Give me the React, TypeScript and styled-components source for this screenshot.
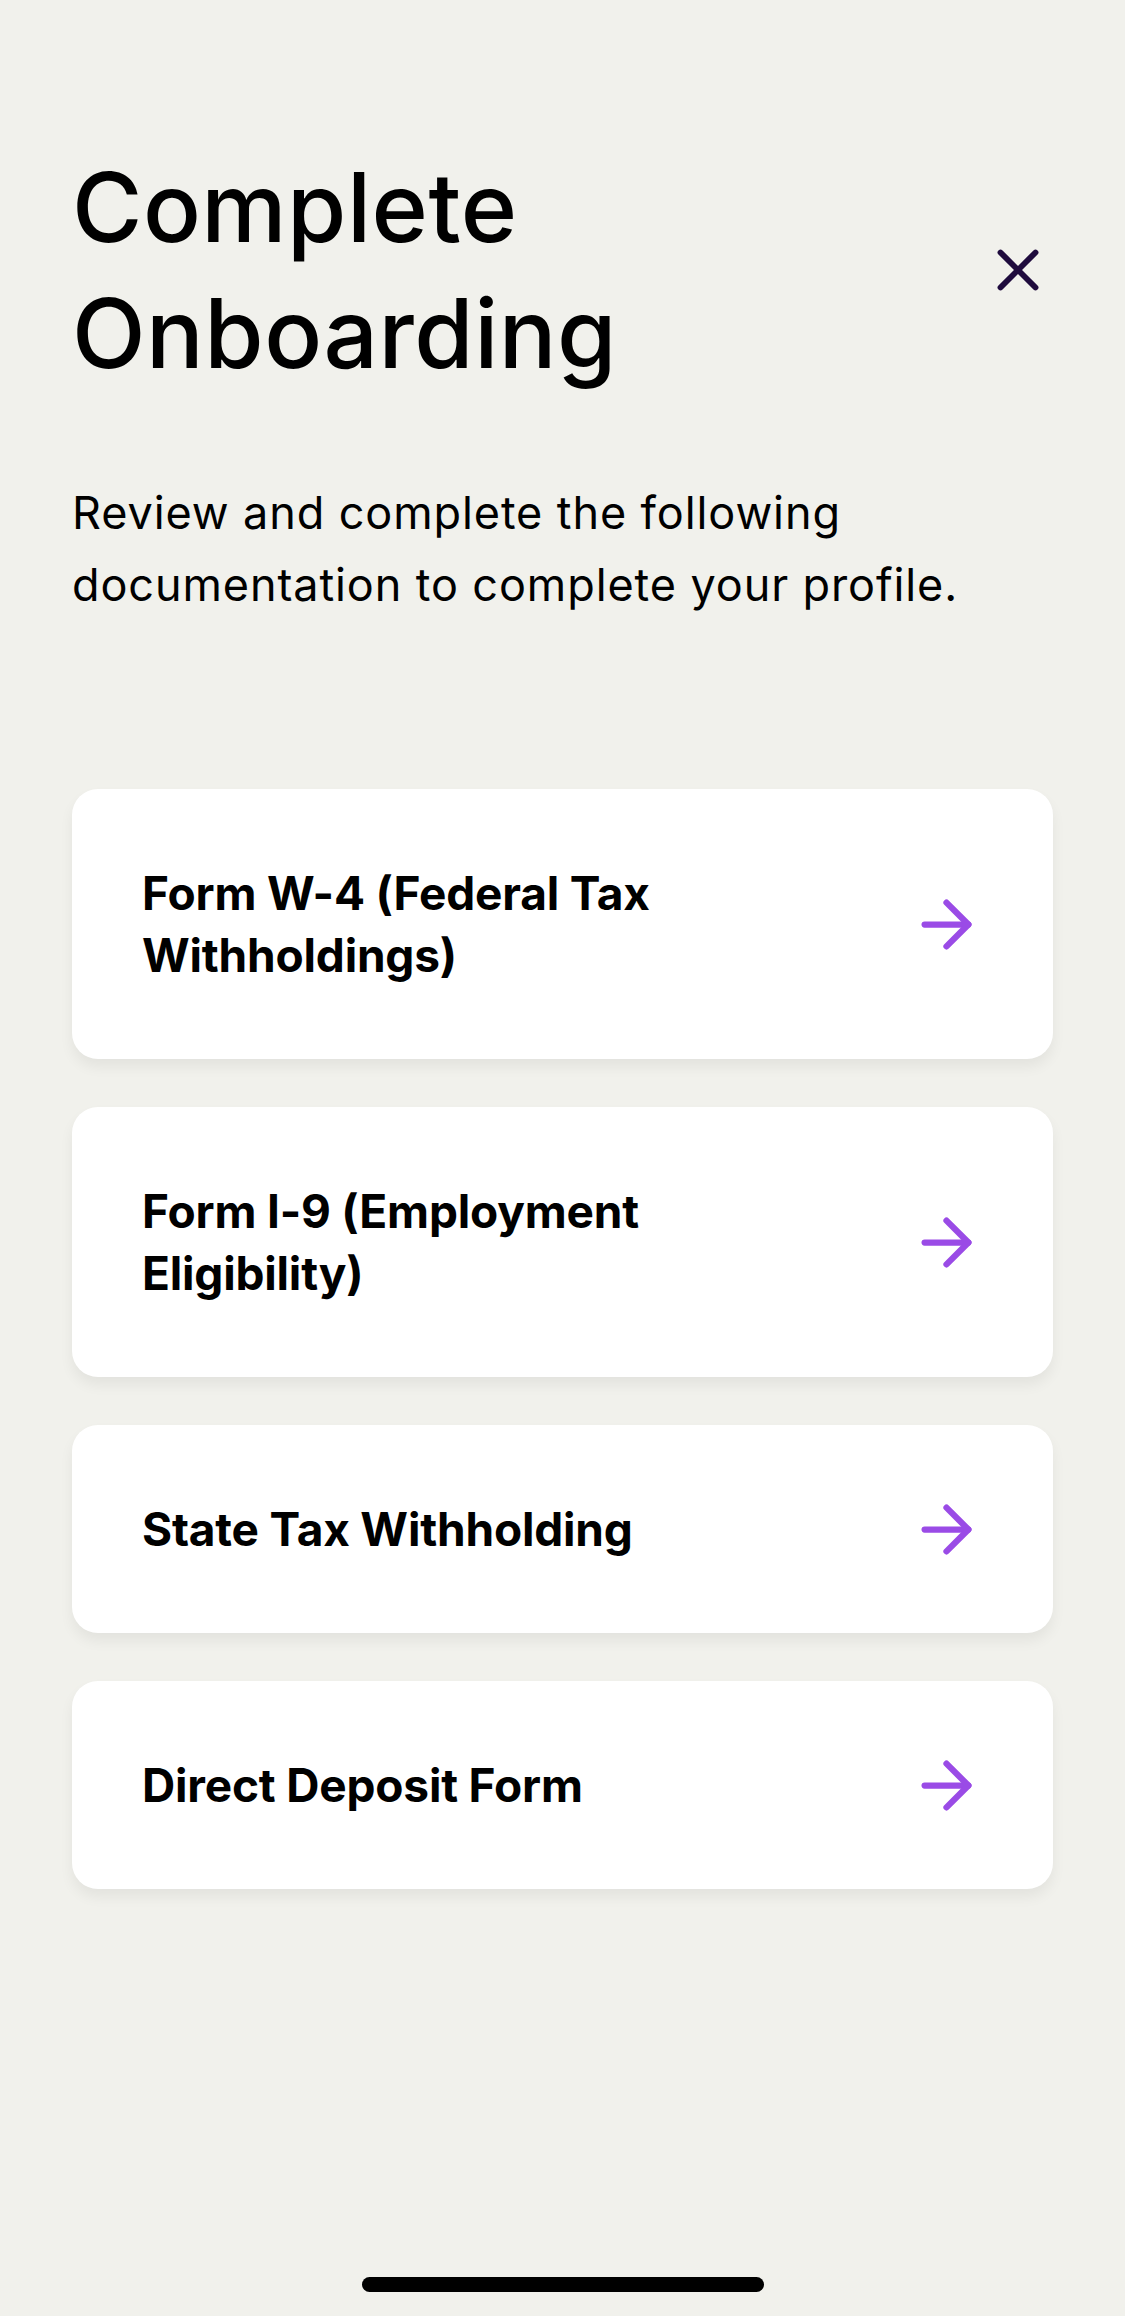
import styled, { createGlobalStyle } from 'styled-components';
import { ArrowRight, X } from 'lucide-react';

const FORMS = [
  { id: 1, title: 'Form W-4 (Federal Tax Withholdings)' },
  { id: 2, title: 'Form I-9 (Employment Eligibility)' },
  { id: 3, title: 'State Tax Withholding' },
  { id: 4, title: 'Direct Deposit Form' },
];

const GlobalStyle = createGlobalStyle`
  html, body {
    margin: 0;
    padding: 0;
    background: #f1f1ec;
  }
  body {
    font-family: Inter, 'Noto Sans', sans-serif;
    color: #000;
  }
`;

const Screen = styled.div`
  width: 1125px;
  height: 2316px;
  box-sizing: border-box;
  padding: 144px 72px 0 72px;
  display: flex;
  flex-direction: column;
  background: #f1f1ec;
`;

const Header = styled.div`
  display: flex;
  align-items: center;
  justify-content: space-between;
`;

const Title = styled.h1`
  margin: 0;
  font-size: 96px;
  line-height: 126px;
  font-weight: 500;
  letter-spacing: 0.005em;
`;

const CloseButton = styled.button`
  border: 0;
  background: none;
  padding: 0;
  margin-right: 0;
  display: flex;
  color: #1f0b3d;
  cursor: pointer;
`;

const Intro = styled.p`
  margin: 81px 0 0 0;
  font-size: 45px;
  line-height: 72px;
  font-weight: 400;
  letter-spacing: 0.02em;
  max-width: 981px;
`;

const List = styled.div`
  margin-top: 168px;
  display: flex;
  flex-direction: column;
  gap: 48px;
`;

const Card = styled.button`
  display: flex;
  align-items: center;
  justify-content: space-between;
  padding: 73px 69px 73px 70px;
  border: 0;
  border-radius: 26px;
  background: #fff;
  box-shadow: 0 8px 14px rgba(0, 0, 0, 0.06);
  text-align: left;
  font-family: inherit;
  cursor: pointer;
`;

const CardTitle = styled.span`
  font-size: 46px;
  line-height: 62px;
  font-weight: 700;
  letter-spacing: -0.004em;
  color: #000;
  max-width: 600px;
`;

const Arrow = styled.span`
  display: flex;
  align-items: center;
  height: 62px;
  margin-right: 0;
  color: #9a4be6;
`;

const HomeBar = styled.div`
  margin: auto auto 24px auto;
  width: 402px;
  height: 15px;
  border-radius: 8px;
  background: #000;
`;

const App = () => {
  return (
    <>
      <GlobalStyle />
      <Screen>
        <Header>
          <Title>
            Complete
            <br />
            Onboarding
          </Title>
          <CloseButton aria-label='Close'>
            <X size={70} strokeWidth={2} />
          </CloseButton>
        </Header>
        <Intro>
          Review and complete the following documentation to complete your
          profile.
        </Intro>
        <List>
          {FORMS.map(form => (
            <Card key={form.id}>
              <CardTitle>{form.title}</CardTitle>
              <Arrow>
                <ArrowRight size={75} strokeWidth={2} />
              </Arrow>
            </Card>
          ))}
        </List>
        <HomeBar />
      </Screen>
    </>
  );
};

export default App;
